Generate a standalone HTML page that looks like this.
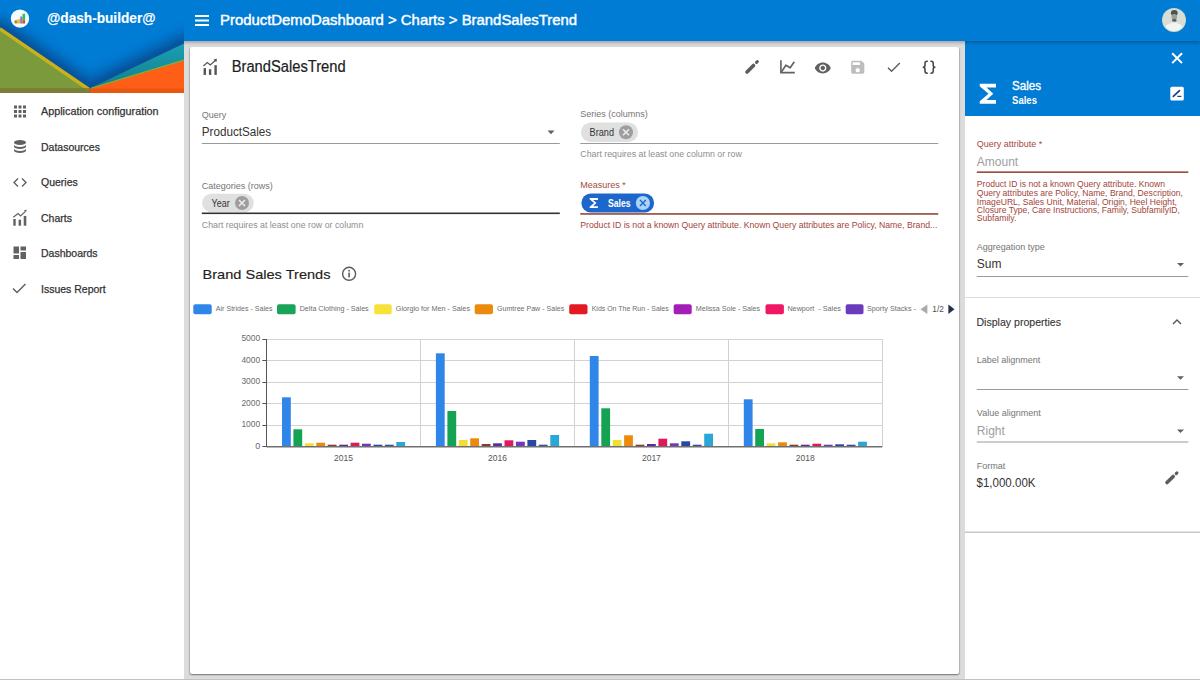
<!DOCTYPE html>
<html><head><meta charset="utf-8"><title>Dashbuilder</title>
<style>
html,body{margin:0;padding:0;}
body{width:1200px;height:680px;overflow:hidden;position:relative;background:#dcdcdc;font-family:"Liberation Sans",sans-serif;}
.box{position:absolute;}
#topbar{left:0;top:0;width:1200px;height:41px;background:#007cd5;box-shadow:0 1px 4px rgba(0,0,0,.35);z-index:3;}
#sidebar{left:0;top:0;width:184px;height:680px;background:#fff;z-index:4;}
#card{left:189.5px;top:47px;width:769.5px;height:626.5px;background:#fff;border-radius:2px;box-shadow:1px 1px 1px 0 rgba(0,0,0,.14),-1px 1px 1px 0 rgba(0,0,0,.14),0 1px 2px 0 rgba(0,0,0,.28);z-index:1;}
#bline{left:0;top:679px;width:1200px;height:1px;background:#c2c2c2;z-index:20;}
#panel{left:965px;top:41px;width:235px;height:639px;background:#fff;z-index:2;}
#phead{left:965px;top:41px;width:235px;height:75px;background:#007cd5;z-index:2;}
svg{position:absolute;left:0;top:0;z-index:10;}
text{font-family:"Liberation Sans",sans-serif;}
</style></head>
<body>
<div id="topbar" class="box"></div>
<div id="sidebar" class="box"></div>
<div id="card" class="box"></div>
<div id="panel" class="box"></div>
<div id="phead" class="box"></div>
<div id="bline" class="box"></div>

<svg width="1200" height="680" viewBox="0 0 1200 680">
 <!-- ===== sidebar header ===== -->
 <g id="sbhead">
  <defs>
   <filter id="blur3" x="-20%" y="-50%" width="140%" height="200%"><feGaussianBlur stdDeviation="3"/></filter>
   <filter id="blur5" x="-20%" y="-50%" width="140%" height="200%"><feGaussianBlur stdDeviation="6"/></filter>
   <clipPath id="hclip"><rect x="0" y="0" width="184" height="93"/></clipPath>
  </defs>
  <g clip-path="url(#hclip)">
  <defs>
   <linearGradient id="tealg" x1="0" y1="0" x2="0" y2="1"><stop offset="0" stop-color="#1aa0b4"/><stop offset="1" stop-color="#137a88"/></linearGradient>
  </defs>
  <rect x="0" y="0" width="184" height="93" fill="#007cd5"/>
  <polyline points="-5,22 89.5,86 190,38" stroke="#08346e" stroke-width="16" fill="none" opacity="0.45" filter="url(#blur5)"/>
  <polyline points="-5,24 89.5,88.5 190,41" stroke="#08346e" stroke-width="6" fill="none" opacity="0.5" filter="url(#blur3)"/>
  <polygon points="89.5,88.5 184,43.4 184,93 89.5,93" fill="url(#tealg)"/>
  <polygon points="89.5,89 184,60.5 184,93 89.5,93" fill="#ff5e17"/>
  <polyline points="91,88.3 184,60" stroke="#8fb02a" stroke-width="1.2" fill="none"/>
  <polygon points="0,27.5 89.5,88.5 89.5,93 0,93" fill="#7a9a3c"/>
  <polyline points="0,29 89,89.5" stroke="#c9b11c" stroke-width="3.4" fill="none"/>
  <rect x="0" y="88" width="90" height="5" fill="#7f7434" opacity="0.75"/>
  <rect x="90" y="88.5" width="94" height="4.5" fill="#e2560f" opacity="0.8"/>
  </g>
  <circle cx="20" cy="18.6" r="9.2" fill="#f2fbfd"/>
  <rect x="14.5" y="20.3" width="2.6" height="3.2" rx="1" fill="#c07a2a"/>
  <rect x="17.1" y="19.3" width="3" height="4.2" fill="#e3c23a"/>
  <rect x="20.2" y="16.5" width="2.2" height="7" fill="#9a6fc8"/>
  <rect x="22.5" y="13.8" width="2.6" height="7.2" fill="#3cbf3c"/>
  <rect x="22.5" y="20.8" width="2.6" height="2.7" fill="#ee3b3b"/>
  <text x="47" y="22.8" font-size="14" font-weight="700" fill="#fff" stroke="#fff" stroke-width="0.15" textLength="108.5" lengthAdjust="spacingAndGlyphs">@dash-builder@</text>
 </g>

 <!-- ===== nav ===== -->
 <g id="nav" fill="#616161">
  <!-- apps grid -->
  <g>
   <rect x="14" y="105.5" width="3" height="3"/><rect x="18.5" y="105.5" width="3" height="3"/><rect x="23" y="105.5" width="3" height="3"/>
   <rect x="14" y="110" width="3" height="3"/><rect x="18.5" y="110" width="3" height="3"/><rect x="23" y="110" width="3" height="3"/>
   <rect x="14" y="114.5" width="3" height="3"/><rect x="18.5" y="114.5" width="3" height="3"/><rect x="23" y="114.5" width="3" height="3"/>
  </g>
  <!-- database -->
  <g>
   <ellipse cx="20" cy="142.5" rx="6" ry="2.6"/>
   <path d="M14 144.5 v2 a6 2.6 0 0 0 12 0 v-2 a6 2.6 0 0 1 -12 0z"/>
   <path d="M14 148.5 v2 a6 2.6 0 0 0 12 0 v-2 a6 2.6 0 0 1 -12 0z"/>
  </g>
  <!-- code -->
  <path d="M18 178.5 l-4 4 l4 4" stroke="#616161" stroke-width="1.4" fill="none"/>
  <path d="M22 178.5 l4 4 l-4 4" stroke="#616161" stroke-width="1.4" fill="none"/>
  <!-- charts -->
  <g>
   <rect x="13.3" y="219" width="2.4" height="6.7"/><rect x="18.6" y="219.7" width="2.5" height="6"/><rect x="23.7" y="215.9" width="2.6" height="9.8"/>
   <path d="M13.3 217.3 l4.7 -3.8 l2.6 2.5 l4.8 -4.6" stroke="#616161" stroke-width="1.2" fill="none"/>
   <path d="M24 210.2 l2.6 -0.6 l-0.5 2.6z"/>
  </g>
  <!-- dashboards -->
  <g>
   <rect x="13.5" y="246.5" width="5.5" height="7"/><rect x="20.5" y="246.5" width="5.5" height="4"/>
   <rect x="13.5" y="255" width="5.5" height="4"/><rect x="20.5" y="252" width="5.5" height="7"/>
  </g>
  <!-- check -->
  <path d="M13 288.5 l4 4 l8.5 -8.5" stroke="#616161" stroke-width="1.5" fill="none"/>

  <g fill="#333" stroke="#333" stroke-width="0.25" font-size="10.5">
   <text x="41" y="114.9" textLength="117.6" lengthAdjust="spacingAndGlyphs">Application configuration</text>
   <text x="41" y="150.6">Datasources</text>
   <text x="41" y="186.4">Queries</text>
   <text x="41" y="222">Charts</text>
   <text x="41" y="257.3">Dashboards</text>
   <text x="41" y="292.9">Issues Report</text>
  </g>
 </g>

 <!-- ===== top bar ===== -->
 <g id="topcontent" fill="#fff">
  <rect x="195" y="15" width="14" height="2"/>
  <rect x="195" y="19.5" width="14" height="2"/>
  <rect x="195" y="24" width="14" height="2"/>
  <text x="220" y="25.2" font-size="15.5" stroke="#fff" stroke-width="0.45" textLength="357" lengthAdjust="spacingAndGlyphs">ProductDemoDashboard &gt; Charts &gt; BrandSalesTrend</text>
  <clipPath id="avclip"><circle cx="1174" cy="20" r="11"/></clipPath>
  <circle cx="1174" cy="20" r="12" fill="#c9dccf"/>
  <g clip-path="url(#avclip)">
  <circle cx="1174" cy="20" r="11" fill="#d8ddd8"/>
  <ellipse cx="1174.3" cy="13" rx="3.4" ry="3" fill="#4a544c"/>
  <ellipse cx="1174.3" cy="17" rx="2.8" ry="3" fill="#9aa19a"/>
  <ellipse cx="1174.3" cy="20.3" rx="2.2" ry="1.5" fill="#5a605a"/>
  <path d="M1163 32 q2 -9 11 -9.5 q9 0.5 11 9.5z" fill="#f3f5f2"/>
  </g>
 </g>

 <!-- ===== card header ===== -->
 <g id="cardhead">
  <g fill="#555">
   <rect x="203.6" y="68.1" width="2.4" height="6.8"/>
   <rect x="208.9" y="69.2" width="2.4" height="5.7"/>
   <rect x="214.4" y="65.2" width="2.4" height="9.7"/>
   <path d="M203.4 66 L207.3 62.6 L210.3 65 L215.5 60.2" stroke="#555" stroke-width="1.2" fill="none"/>
   <path d="M213.5 59.5 L217 58.8 L216.3 62.3z"/>
  </g>
  <text x="231.7" y="71.8" font-size="15.8" fill="#212121" stroke="#212121" stroke-width="0.2" textLength="114" lengthAdjust="spacingAndGlyphs">BrandSalesTrend</text>

  <!-- toolbar icons -->
  <g fill="#616161">
   <path d="M747 71.9 L753.5 65.4" stroke="#5c5c5c" stroke-width="3.6" stroke-linecap="round"/><path d="M756.5 62.4 L757.4 61.5" stroke="#5c5c5c" stroke-width="3" stroke-linecap="round"/>
   <path d="M780.9 60.2 V72.6 H794.8" stroke="#616161" stroke-width="1.6" fill="none"/><path d="M781.2 72.2 L785.9 65.2 L790.2 67.8 L794.3 61.8" stroke="#616161" stroke-width="1.6" fill="none" stroke-linejoin="round"/>
   <svg x="814.1" y="59.3" width="17.4" height="17.4" viewBox="0 0 24 24"><path d="M12 4.5C7 4.5 2.73 7.61 1 12c1.73 4.39 6 7.5 11 7.5s9.27-3.11 11-7.5c-1.73-4.39-6-7.5-11-7.5zM12 17c-2.76 0-5-2.240-5-5s2.24-5 5-5 5 2.24 5 5-2.24 5-5 5zm0-8c-1.66 0-3 1.34-3 3s1.34 3 3 3 3-1.34 3-3-1.34-3-3-3z"/></svg>
   <svg x="849" y="58.5" width="17.5" height="17.5" viewBox="0 0 24 24"><path fill="#bdbdbd" d="M17 3H5c-1.11 0-2 .9-2 2v14c0 1.1.89 2 2 2h14c1.1 0 2-.9 2-2V7l-4-4zm-5 16c-1.66 0-3-1.34-3-3s1.34-3 3-3 3 1.34 3 3-1.34 3-3 3zm3-10H5V5h10v4z"/></svg>
   <svg x="885" y="58.5" width="17.5" height="17.5" viewBox="0 0 24 24"><path d="M9 16.17L4.83 12l-1.42 1.41L9 19 21 7l-1.41-1.41z"/></svg>
   <path d="M927.8 61.2 h-0.7 q-2.1 0 -2.1 2.1 v2.2 q0 1.7 -2.2 1.7 q2.2 0 2.2 1.7 v2.2 q0 2.1 2.1 2.1 h0.7" stroke="#424242" stroke-width="1.5" fill="none"/>
   <path d="M930.4 61.2 h0.7 q2.1 0 2.1 2.1 v2.2 q0 1.7 2.2 1.7 q-2.2 0 -2.2 1.7 v2.2 q0 2.1 -2.1 2.1 h-0.7" stroke="#424242" stroke-width="1.5" fill="none"/>
  </g>
 </g>

 <!-- ===== form ===== -->
 <g id="form">
  <!-- Query -->
  <text x="201.8" y="117.5" font-size="9" fill="#757575">Query</text>
  <text x="201.8" y="136" font-size="12.6" fill="#333" textLength="69.4" lengthAdjust="spacingAndGlyphs">ProductSales</text>
  <rect x="201.8" y="143" width="358" height="1" fill="#9a9a9a"/>
  <path d="M547.5 130.5 h7 l-3.5 3.8z" fill="#616161"/>

  <!-- Categories -->
  <text x="201.8" y="188.5" font-size="9" fill="#757575">Categories (rows)</text>
  <rect x="202.2" y="193.7" width="51.5" height="18.6" rx="9.3" fill="#e0e0e0"/>
  <text x="211.5" y="207" font-size="10" fill="#333" textLength="18.2" lengthAdjust="spacingAndGlyphs">Year</text>
  <circle cx="242" cy="203" r="7" fill="#9e9e9e"/>
  <path d="M239 200 l6 6 M245 200 l-6 6" stroke="#ececec" stroke-width="1.6"/>
  <rect x="201.8" y="212.5" width="358" height="1.6" fill="#333"/>
  <text x="201.8" y="227.6" font-size="8.5" fill="#8d8d8d" textLength="161.5" lengthAdjust="spacingAndGlyphs">Chart requires at least one row or column</text>

  <!-- Series -->
  <text x="580.3" y="117.3" font-size="9" fill="#757575">Series (columns)</text>
  <rect x="581" y="122.5" width="57" height="19.5" rx="9.7" fill="#e0e0e0"/>
  <text x="589.6" y="136.3" font-size="10" fill="#333" textLength="24.4" lengthAdjust="spacingAndGlyphs">Brand</text>
  <circle cx="626" cy="132.3" r="7" fill="#9e9e9e"/>
  <path d="M623 129.3 l6 6 M629 129.3 l-6 6" stroke="#ececec" stroke-width="1.6"/>
  <rect x="580.3" y="143" width="358" height="1" fill="#9a9a9a"/>
  <text x="580.3" y="157.2" font-size="8.5" fill="#8d8d8d" textLength="161.5" lengthAdjust="spacingAndGlyphs">Chart requires at least one column or row</text>

  <!-- Measures -->
  <text x="580.3" y="188" font-size="9" fill="#a24a3e">Measures *</text>
  <rect x="581.4" y="193.6" width="72.7" height="18.8" rx="9.4" fill="#1d66cc"/>
  <svg x="585.45" y="195.6" width="16.6" height="15" viewBox="0 0 24 24" preserveAspectRatio="none"><path fill="#fff" d="M18 4H6v2l6.5 6L6 18v2h12v-3h-7l5-5-5-5h7z"/></svg>
  <text x="608" y="206.8" font-size="10" font-weight="700" fill="#fff" textLength="22.6" lengthAdjust="spacingAndGlyphs">Sales</text>
  <circle cx="642.9" cy="203" r="7.1" fill="#a9d4f5"/>
  <path d="M640 200.1 l5.8 5.8 M645.8 200.1 l-5.8 5.8" stroke="#1f6ad0" stroke-width="1.4"/>
  <rect x="580.3" y="213.2" width="358" height="1.5" fill="#8e3a2c"/>
  <text x="580.3" y="228.1" font-size="8.7" fill="#a2453a" textLength="357" lengthAdjust="spacingAndGlyphs">Product ID is not a known Query attribute. Known Query attributes are Policy, Name, Brand...</text>
 </g>

 <!-- ===== chart ===== -->
 <g id="chart">
  <text x="202.5" y="278.7" font-size="13.5" fill="#222" stroke="#222" stroke-width="0.15" textLength="128" lengthAdjust="spacingAndGlyphs">Brand Sales Trends</text>
  <circle cx="349.1" cy="273.8" r="6.5" fill="none" stroke="#5a5a5a" stroke-width="1.4"/>
  <rect x="348.3" y="272.6" width="1.6" height="4.8" fill="#5a5a5a"/>
  <rect x="348.3" y="269.9" width="1.6" height="1.6" fill="#5a5a5a"/>

  <!-- legend -->
  <g font-size="8" fill="#6e6e6e">
   <rect x="193.3" y="304.2" width="18.4" height="10" rx="2" fill="#2f86e8"/>
   <text x="215.8" y="310.8" textLength="56.7" lengthAdjust="spacingAndGlyphs">Air Strides - Sales</text>
   <rect x="277" y="304.2" width="18.6" height="10" rx="2" fill="#1aa359"/>
   <text x="299.7" y="310.8" textLength="69" lengthAdjust="spacingAndGlyphs">Delta Clothing - Sales</text>
   <rect x="374.2" y="304.2" width="17.5" height="10" rx="2" fill="#f7e23a"/>
   <text x="395.8" y="310.8" textLength="74.2" lengthAdjust="spacingAndGlyphs">Giorgio for Men - Sales</text>
   <rect x="474.7" y="304.2" width="18.3" height="10" rx="2" fill="#ec8a0e"/>
   <text x="497" y="310.8" textLength="67.2" lengthAdjust="spacingAndGlyphs">Gumtree Paw - Sales</text>
   <rect x="569.2" y="304.2" width="18.3" height="10" rx="2" fill="#e41a22"/>
   <text x="591.7" y="310.8" textLength="77" lengthAdjust="spacingAndGlyphs">Kids On The Run - Sales</text>
   <rect x="673.7" y="304.2" width="18" height="10" rx="2" fill="#a31eb6"/>
   <text x="695.8" y="310.8" textLength="64.2" lengthAdjust="spacingAndGlyphs">Melissa Sole - Sales</text>
   <rect x="765.5" y="304.2" width="18.4" height="10" rx="2" fill="#f01864"/>
   <text x="787.4" y="310.8" textLength="53.4" lengthAdjust="spacingAndGlyphs" xml:space="preserve">Newport  - Sales</text>
   <rect x="845.7" y="304.2" width="17.8" height="10" rx="2" fill="#6a3cbc"/>
   <text x="867" y="310.8" textLength="49" lengthAdjust="spacingAndGlyphs">Sporty Stacks -</text>
   <path d="M927.4 304.6 v9.4 l-7 -4.7z" fill="#aaaaaa"/>
   <text x="932.3" y="311.7" font-size="9" fill="#505050" textLength="11.5" lengthAdjust="spacingAndGlyphs">1/2</text>
   <path d="M948.4 304.6 v9.4 l6.1 -4.7z" fill="#253048"/>
  </g>

  <!-- axes / grid -->
  <g stroke="#d2d2d2" stroke-width="1">
   <line x1="266.6" y1="339.5" x2="882.3" y2="339.5"/>
   <line x1="266.6" y1="360.5" x2="882.3" y2="360.5"/>
   <line x1="266.6" y1="382.5" x2="882.3" y2="382.5"/>
   <line x1="266.6" y1="403.5" x2="882.3" y2="403.5"/>
   <line x1="266.6" y1="425.5" x2="882.3" y2="425.5"/>
   <line x1="420.5" y1="339" x2="420.5" y2="446.5"/>
   <line x1="574.5" y1="339" x2="574.5" y2="446.5"/>
   <line x1="728.5" y1="339" x2="728.5" y2="446.5"/>
   <line x1="882.5" y1="339" x2="882.5" y2="446.5"/>
  </g>
  <g stroke="#555">
   <line x1="266.5" y1="339" x2="266.5" y2="447"/>
   <line x1="262.3" y1="339.5" x2="266.6" y2="339.5"/>
   <line x1="262.3" y1="360.5" x2="266.6" y2="360.5"/>
   <line x1="262.3" y1="382.5" x2="266.6" y2="382.5"/>
   <line x1="262.3" y1="403.5" x2="266.6" y2="403.5"/>
   <line x1="262.3" y1="425.5" x2="266.6" y2="425.5"/>
   <line x1="262.3" y1="446.5" x2="266.6" y2="446.5"/>
  </g>
  <g font-size="9" fill="#6a6a6a" text-anchor="end">
   <text x="260.2" y="341" textLength="18.8" lengthAdjust="spacingAndGlyphs">5000</text>
   <text x="260.2" y="362.5" textLength="18.8" lengthAdjust="spacingAndGlyphs">4000</text>
   <text x="260.2" y="384" textLength="18.8" lengthAdjust="spacingAndGlyphs">3000</text>
   <text x="260.2" y="405.5" textLength="18.8" lengthAdjust="spacingAndGlyphs">2000</text>
   <text x="260.2" y="427" textLength="18.8" lengthAdjust="spacingAndGlyphs">1000</text>
   <text x="260.2" y="448.5">0</text>
  </g>
  <g id="bars">
   <rect x="282.0" y="397.3" width="8.8" height="49.2" fill="#2f86e8"/>
   <rect x="293.4" y="429.3" width="8.8" height="17.2" fill="#14a352"/>
   <rect x="304.9" y="443.3" width="8.8" height="3.2" fill="#f2df34"/>
   <rect x="316.3" y="442.7" width="8.8" height="3.8" fill="#ec8a0e"/>
   <rect x="327.7" y="444.7" width="8.8" height="1.8" fill="#8c3a26"/>
   <rect x="339.2" y="444.7" width="8.8" height="1.8" fill="#5e2a9e"/>
   <rect x="350.6" y="442.7" width="8.8" height="3.8" fill="#e0195c"/>
   <rect x="362.0" y="443.7" width="8.8" height="2.8" fill="#7437b8"/>
   <rect x="373.5" y="444.7" width="8.8" height="1.8" fill="#2848a6"/>
   <rect x="384.9" y="444.7" width="8.8" height="1.8" fill="#3a4c9c"/>
   <rect x="396.3" y="442.0" width="8.8" height="4.5" fill="#2aa6d8"/>
   <rect x="435.9" y="353.3" width="8.8" height="93.2" fill="#2f86e8"/>
   <rect x="447.4" y="411.0" width="8.8" height="35.5" fill="#14a352"/>
   <rect x="458.8" y="440.0" width="8.8" height="6.5" fill="#f2df34"/>
   <rect x="470.2" y="438.3" width="8.8" height="8.2" fill="#ec8a0e"/>
   <rect x="481.7" y="444.0" width="8.8" height="2.5" fill="#8c3a26"/>
   <rect x="493.1" y="443.3" width="8.8" height="3.2" fill="#5e2a9e"/>
   <rect x="504.5" y="440.3" width="8.8" height="6.2" fill="#e0195c"/>
   <rect x="516.0" y="441.7" width="8.8" height="4.8" fill="#7437b8"/>
   <rect x="527.4" y="440.0" width="8.8" height="6.5" fill="#2848a6"/>
   <rect x="538.8" y="444.7" width="8.8" height="1.8" fill="#3a4c9c"/>
   <rect x="550.3" y="435.0" width="8.8" height="11.5" fill="#2aa6d8"/>
   <rect x="589.8" y="356.0" width="8.8" height="90.5" fill="#2f86e8"/>
   <rect x="601.3" y="408.3" width="8.8" height="38.2" fill="#14a352"/>
   <rect x="612.7" y="440.0" width="8.8" height="6.5" fill="#f2df34"/>
   <rect x="624.1" y="435.3" width="8.8" height="11.2" fill="#ec8a0e"/>
   <rect x="635.6" y="444.7" width="8.8" height="1.8" fill="#8c3a26"/>
   <rect x="647.0" y="444.0" width="8.8" height="2.5" fill="#5e2a9e"/>
   <rect x="658.4" y="438.7" width="8.8" height="7.8" fill="#e0195c"/>
   <rect x="669.9" y="443.3" width="8.8" height="3.2" fill="#7437b8"/>
   <rect x="681.3" y="441.3" width="8.8" height="5.2" fill="#2848a6"/>
   <rect x="692.8" y="444.7" width="8.8" height="1.8" fill="#3a4c9c"/>
   <rect x="704.2" y="433.7" width="8.8" height="12.8" fill="#2aa6d8"/>
   <rect x="743.8" y="399.3" width="8.8" height="47.2" fill="#2f86e8"/>
   <rect x="755.2" y="429.0" width="8.8" height="17.5" fill="#14a352"/>
   <rect x="766.6" y="443.3" width="8.8" height="3.2" fill="#f2df34"/>
   <rect x="778.1" y="442.3" width="8.8" height="4.2" fill="#ec8a0e"/>
   <rect x="789.5" y="444.7" width="8.8" height="1.8" fill="#8c3a26"/>
   <rect x="800.9" y="444.7" width="8.8" height="1.8" fill="#5e2a9e"/>
   <rect x="812.4" y="443.7" width="8.8" height="2.8" fill="#e0195c"/>
   <rect x="823.8" y="444.7" width="8.8" height="1.8" fill="#7437b8"/>
   <rect x="835.2" y="444.3" width="8.8" height="2.2" fill="#2848a6"/>
   <rect x="846.7" y="444.7" width="8.8" height="1.8" fill="#3a4c9c"/>
   <rect x="858.1" y="441.7" width="8.8" height="4.8" fill="#2aa6d8"/>
  </g>
  <line x1="266.6" y1="446.7" x2="882.3" y2="446.7" stroke="#707070" stroke-width="1.6"/>
  <g font-size="8.5" fill="#555" text-anchor="middle">
   <text x="343.5" y="460.7">2015</text>
   <text x="497.5" y="460.7">2016</text>
   <text x="651.4" y="460.7">2017</text>
   <text x="805.3" y="460.7">2018</text>
  </g>
 </g>

 <!-- ===== right panel ===== -->
 <g id="panelcontent">
  <path d="M1172.2 53.3 l9.8 9.8 M1182 53.3 l-9.8 9.8" stroke="#fff" stroke-width="2"/>
  <svg x="971.55" y="78.68" width="32.6" height="30.1" viewBox="0 0 24 24" preserveAspectRatio="none"><path fill="#fff" d="M18 4H6v2l6.5 6L6 18v2h12v-3h-7l5-5-5-5h7z"/></svg>
  <text x="1012" y="90" font-size="12.5" fill="#fff" stroke="#fff" stroke-width="0.35" textLength="29" lengthAdjust="spacingAndGlyphs">Sales</text>
  <text x="1012" y="104.1" font-size="10" font-weight="700" fill="#fff" textLength="25" lengthAdjust="spacingAndGlyphs">Sales</text>
  <rect x="1170.3" y="86.7" width="13.5" height="13.9" rx="1.5" fill="#fff"/>
  <path d="M1173.3 96.4 l6.2 -5.8" stroke="#1d3f8f" stroke-width="1.7" stroke-linecap="round"/>
  <rect x="1177.3" y="95.8" width="4.1" height="1.2" fill="#1d3f8f"/>

  <text x="976.8" y="147.2" font-size="9" fill="#a24a3e">Query attribute *</text>
  <text x="976.8" y="165.6" font-size="12" fill="#9e9e9e">Amount</text>
  <rect x="976.8" y="171.4" width="211.5" height="1.5" fill="#8d3c30"/>
  <g font-size="8.6" fill="#a2453a">
   <text x="976.8" y="186.9">Product ID is not a known Query attribute. Known</text>
   <text x="976.8" y="195.7">Query attributes are Policy, Name, Brand, Description,</text>
   <text x="976.8" y="204.9">ImageURL, Sales Unit, Material, Origin, Heel Height,</text>
   <text x="976.8" y="213.3">Closure Type, Care Instructions, Family, SubfamilyID,</text>
   <text x="976.8" y="221.2">Subfamily.</text>
  </g>
  <text x="976.8" y="250.2" font-size="9" fill="#757575">Aggregation type</text>
  <text x="976.8" y="268.4" font-size="12" fill="#333">Sum</text>
  <path d="M1177 263 h7 l-3.5 3.5z" fill="#616161"/>
  <rect x="976.8" y="276" width="211.5" height="1" fill="#9a9a9a"/>
  <rect x="965" y="297" width="235" height="1" fill="#dddddd"/>

  <text x="976.5" y="326" font-size="10.5" fill="#333" stroke="#333" stroke-width="0.1" textLength="84.5" lengthAdjust="spacingAndGlyphs">Display properties</text>
  <path d="M1173 324 l4 -4 l4 4" stroke="#555" stroke-width="1.4" fill="none"/>
  <text x="976.8" y="362.8" font-size="9" fill="#757575">Label alignment</text>
  <path d="M1177 376.2 h7 l-3.5 3.5z" fill="#616161"/>
  <rect x="976.8" y="389" width="211.5" height="1" fill="#9a9a9a"/>
  <text x="976.8" y="416" font-size="9" fill="#757575">Value alignment</text>
  <text x="976.8" y="435.2" font-size="12" fill="#9e9e9e">Right</text>
  <path d="M1177 429.5 h7 l-3.5 3.5z" fill="#616161"/>
  <rect x="976.8" y="441.5" width="211.5" height="1" fill="#9a9a9a"/>
  <text x="976.8" y="469.4" font-size="9" fill="#757575">Format</text>
  <text x="976.5" y="487.4" font-size="12" fill="#333" textLength="59" lengthAdjust="spacingAndGlyphs">$1,000.00K</text>
  <path d="M1167 482.6 L1173.2 476.4" stroke="#5c5c5c" stroke-width="3.6" stroke-linecap="round"/><path d="M1176.2 473.6 L1177 472.8" stroke="#5c5c5c" stroke-width="3" stroke-linecap="round"/>
  <rect x="965" y="531.5" width="235" height="1.5" fill="#c8c8c8"/>
 </g>
</svg>
</body></html>
